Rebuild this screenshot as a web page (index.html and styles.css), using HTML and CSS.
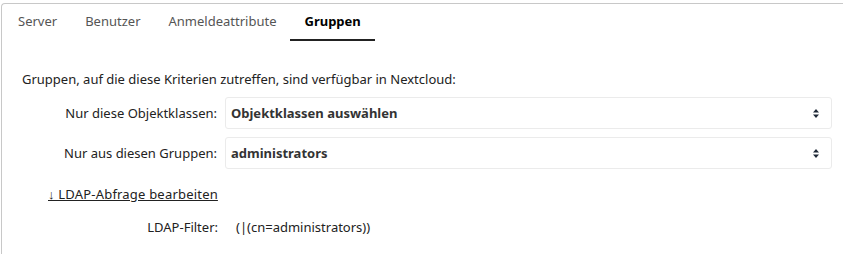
FILE: index.html
```html
<!DOCTYPE html>
<html lang="de">
<head>
<meta charset="utf-8">
<link rel="stylesheet" href="styles.css">
</head>
<body>
<div class="panel">
  <nav class="tabs">
    <span class="tab">Server</span>
    <span class="tab">Benutzer</span>
    <span class="tab">Anmeldeattribute</span>
    <span class="tab active">Gruppen</span>
  </nav>
  <div class="content">
    <p class="desc">Gruppen, auf die diese Kriterien zutreffen, sind verfügbar in Nextcloud:</p>
    <div class="row">
      <label class="label">Nur diese Objektklassen:</label>
      <div class="select"><span>Objektklassen auswählen</span>
        <svg class="arrows" width="6" height="9" viewBox="0 0 6 9"><path d="M0 3.5L3 0L6 3.5Z M0 5.5L3 9L6 5.5Z" fill="#1f2937"/></svg>
      </div>
    </div>
    <div class="row">
      <label class="label">Nur aus diesen Gruppen:</label>
      <div class="select"><span>administrators</span>
        <svg class="arrows" width="6" height="9" viewBox="0 0 6 9"><path d="M0 3.5L3 0L6 3.5Z M0 5.5L3 9L6 5.5Z" fill="#1f2937"/></svg>
      </div>
    </div>
    <a class="edit-link" href="#">↓ LDAP-Abfrage bearbeiten</a>
    <div class="filter-row">
      <span class="label">LDAP-Filter:</span>
      <span class="filter-value">(|(cn=administrators))</span>
    </div>
  </div>
</div>
</body>
</html>
```
FILE: styles.css
```css
html, body {
  margin: 0;
  padding: 0;
  background: #fff;
}
body {
  font-family: "Noto Sans", "Open Sans", sans-serif;
  font-size: 13px;
  color: #222;
}
.panel {
  margin: 3px 0 0 1px;
  border-top: 1px solid #c8c8c8;
  border-left: 1px solid #c8c8c8;
  border-top-left-radius: 4px;
  height: 260px;
}
.tabs {
  display: flex;
  padding: 0 0 0 2px;
  height: 37px;
}
.tab {
  padding: 0 14px;
  line-height: 35px;
  color: #555;
  border-bottom: 2px solid transparent;
}
.tab.active {
  color: #000;
  font-weight: bold;
  border-bottom-color: #222;
}
.content {
  padding: 0 0 0 20px;
}
.desc {
  margin: 29px 0 9px 0;
  line-height: 18px;
}
.row {
  display: flex;
  align-items: center;
  margin-bottom: 8px;
}
.label {
  width: 195px;
  text-align: right;
  padding-right: 8px;
  flex: none;
}
.select {
  width: 607px;
  height: 32px;
  box-sizing: border-box;
  border: 1px solid #ebebeb;
  border-radius: 3px;
  display: flex;
  align-items: center;
  justify-content: space-between;
  padding: 0 12px 0 5px;
  font-weight: bold;
  color: #333;
}
.edit-link {
  display: inline-block;
  margin: 8px 0 0 26px;
  color: #222;
  text-decoration: underline;
  line-height: 18px;
  letter-spacing: 0.2px;
}
.filter-row {
  display: flex;
  margin-top: 15px;
  line-height: 18px;
}
.filter-row .label {
  width: 196px;
  padding-right: 0;
}
.filter-value {
  margin-left: 18px;
}
```
